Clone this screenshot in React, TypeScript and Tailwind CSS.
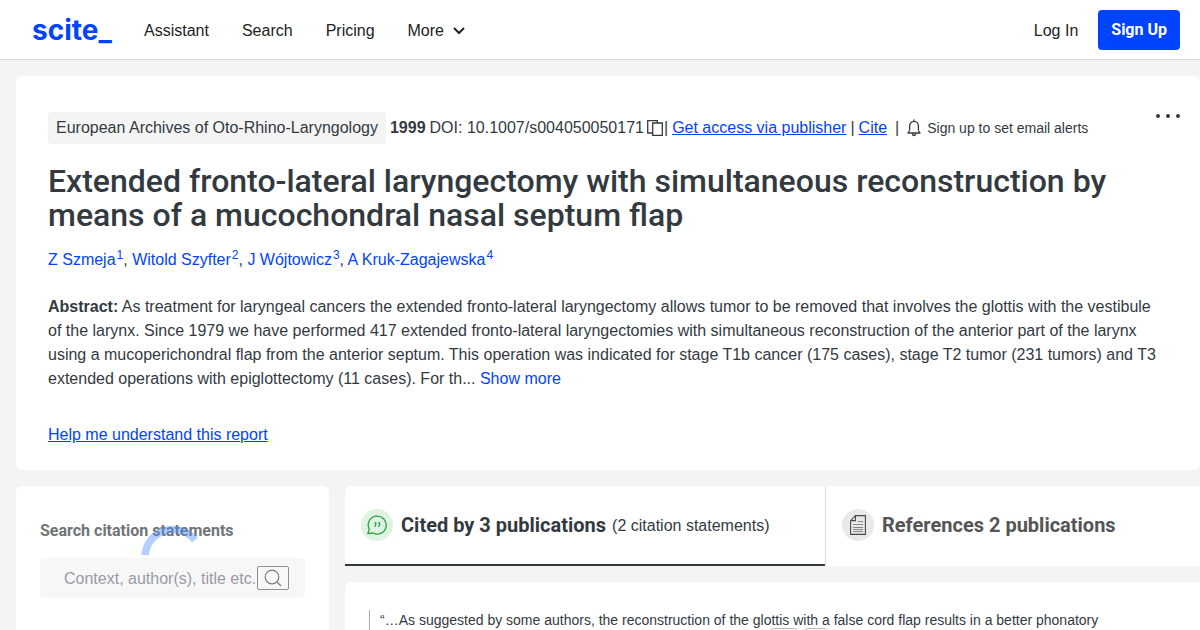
import { useState } from "react";

const authors = ["Z Szmeja", "Witold Szyfter", "J Wójtowicz", "A Kruk-Zagajewska"];

const navLinks = ["Assistant", "Search", "Pricing"];

function CopyIcon() {
  return (
    <svg width="18" height="18" viewBox="0 0 18 18" fill="none" stroke="currentColor" strokeWidth="1.3">
      <path d="M6 14H1.7V1.7h9.6V4" />
      <path d="M6.7 4h9.6v12.3H6.7z" />
    </svg>
  );
}

function BellIcon() {
  return (
    <svg width="14" height="18" viewBox="0 0 14 18" fill="none" stroke="currentColor" strokeWidth="1.3">
      <path d="M7 .5v1.7M.6 14h12.8M2.6 11.5V7.2C2.6 4.5 4.4 2.4 7 2.4s4.4 2.1 4.4 4.8v4.3" />
      <path d="M2.6 11.5L1.2 14M11.4 11.5l1.4 2.5M5.4 14.2c.1 1.7.8 2.3 1.6 2.3s1.5-.6 1.6-2.3" />
    </svg>
  );
}

function QuoteBubbleIcon() {
  return (
    <svg width="20" height="20" viewBox="0 0 20 20" fill="none" stroke="#2f9e44" strokeWidth="1.3">
      <path d="M.8 18.6l1.5-4.3A9 9 0 1 1 6 18z" strokeLinejoin="round" />
      <path d="M7.4 7.8h1.4v1.5c0 1.3-.5 2-1.3 2.5M11.2 7.8h1.4v1.5c0 1.3-.5 2-1.3 2.5" />
    </svg>
  );
}

function DocumentIcon() {
  return (
    <svg width="18" height="20" viewBox="0 0 18 20" fill="none" stroke="#4a4a4a" strokeWidth="1.1">
      <path d="M6.5.6h9.9v18.8H1.6V5.6zM6.5.6v5H1.6" />
      <path d="M9 6.5h5M4 9.5h10M4 12.5h10M4 14.5h10M4 16.5h10" strokeWidth="1" stroke="#888" />
    </svg>
  );
}

function Spinner() {
  return (
    <svg className="absolute left-[124px] top-[38px]" width="62" height="34" viewBox="0 0 62 34" fill="none">
      <path d="M5.1 31A28 28 0 0 1 55 16.1" stroke="#4d8dff" strokeOpacity=".42" strokeWidth="7.5" />
    </svg>
  );
}

export default function App() {
  const [query, setQuery] = useState("");

  return (
    <div className="flex h-screen flex-col overflow-hidden bg-[#f4f4f4] font-['Liberation_Sans',Arial,sans-serif] text-base text-[#333a3f]">
      <header className="flex h-[60px] shrink-0 items-center border-b border-[#d6d6d6] bg-white pl-8 pr-5 text-[#222]">
        <a href="#" className="w-20 font-['Inter',sans-serif] text-[28px] font-bold leading-8 text-[#0044ff]">
          scite_
        </a>
        <nav className="ml-8 flex items-center gap-[33px] pt-0.5">
          {navLinks.map((label) => (
            <a key={label} href="#">{label}</a>
          ))}
          <button type="button" className="flex items-center gap-2">
            More
            <svg width="14" height="8" viewBox="0 0 14 8" fill="none" stroke="currentColor" strokeWidth="2">
              <path d="M2 1l5 5 5-5" />
            </svg>
          </button>
        </nav>
        <a href="#" className="ml-auto pt-0.5">Log In</a>
        <a href="#" className="ml-5 rounded bg-[#0044ff] px-[13px] py-2 font-['Roboto',sans-serif] font-bold text-white">Sign Up</a>
      </header>

      <main className="flex flex-1 flex-col gap-4 pl-4 pt-4">
        <section className="relative rounded-md bg-white px-8 pb-[23px] pt-9">
          <button type="button" aria-label="More options" className="absolute right-5 top-9 flex gap-1.5 py-0.5">
            <span className="size-1 rounded-full bg-[#333a3f]" />
            <span className="size-1 rounded-full bg-[#333a3f]" />
            <span className="size-1 rounded-full bg-[#333a3f]" />
          </button>

          <div className="flex items-center whitespace-nowrap">
            <span className="rounded bg-[#f4f4f4] px-2 py-1">European Archives of Oto-Rhino-Laryngology</span>
            <b className="ml-1">1999</b>
            <span className="ml-1">DOI: 10.1007/s004050050171</span>
            <button type="button" aria-label="Copy DOI" className="ml-0.5"><CopyIcon /></button>
            <span>|</span>
            <a href="#" className="ml-1 text-[#0044ff] underline">Get access via publisher</a>
            <span className="mx-1">|</span>
            <a href="#" className="text-[#0044ff] underline">Cite</a>
            <span className="mx-2">|</span>
            <button type="button" className="flex items-center gap-1.5 text-sm">
              <BellIcon />
              Sign up to set email alerts
            </button>
          </div>

          <h1 className="mt-5 font-['Roboto',sans-serif] text-[32px] font-medium leading-[34px]">
            Extended fronto-lateral laryngectomy with simultaneous reconstruction by means of a mucochondral nasal septum flap
          </h1>

          <p className="mt-4 leading-6">
            {authors.map((name, i) => (
              <span key={name}>
                {i > 0 && ", "}
                <a href="#" className="text-[#0044ff]">
                  {name}
                  <sup className="ml-px text-xs">{i + 1}</sup>
                </a>
              </span>
            ))}
          </p>

          <p className="mt-[23px] leading-6">
            <b>Abstract:</b> As treatment for laryngeal cancers the extended fronto-lateral laryngectomy allows tumor to be removed that involves the glottis with the vestibule
            of the larynx. Since 1979 we have performed 417 extended fronto-lateral laryngectomies with simultaneous reconstruction of the anterior part of the larynx
            using a mucoperichondral flap from the anterior septum. This operation was indicated for stage T1b cancer (175 cases), stage T2 tumor (231 tumors) and T3
            extended operations with epiglottectomy (11 cases). For th...{" "}
            <button type="button" className="text-[#0044ff]">Show more</button>
          </p>

          <a href="#" className="mt-8 inline-block text-[#0044ff] underline">Help me understand this report</a>
        </section>

        <div className="flex flex-1 gap-4">
          <aside className="relative w-[313px] shrink-0 rounded-t-md bg-white px-6 pt-8">
            <label htmlFor="statement-search" className="block pt-px font-['Roboto',sans-serif] font-bold leading-6 text-[#6f7577]">
              Search citation statements
            </label>
            <div className="mt-[15px] flex h-10 items-center rounded bg-[#f7f7f7] pl-6 pr-4">
              <input
                id="statement-search"
                value={query}
                onChange={(e) => setQuery(e.target.value)}
                placeholder="Context, author(s), title etc."
                className="w-full min-w-0 bg-transparent pt-0.5 outline-none placeholder:text-[#9a9ba6]"
              />
              <button type="button" aria-label="Search" className="flex h-6 w-8 shrink-0 items-center justify-center rounded-xs border border-[#8f8f8f] text-[#7c7c7c]">
                <svg width="18" height="18" viewBox="0 0 18 18" fill="none" stroke="currentColor" strokeWidth="1.2">
                  <circle cx="8" cy="8" r="6.8" />
                  <path d="M13 13l4 4" />
                </svg>
              </button>
            </div>
            <Spinner />
          </aside>

          <div className="flex min-w-0 flex-1 flex-col gap-4">
            <div className="flex h-20 shrink-0 rounded-tl-md bg-white">
              <button type="button" className="flex w-[480px] items-center rounded-tl-md border-b-2 border-[#333a3f] px-4">
                <span className="flex size-8 items-center justify-center rounded-full bg-[#def4e0]"><QuoteBubbleIcon /></span>
                <span className="ml-2 font-['Roboto',sans-serif] text-xl font-bold">Cited by 3 publications</span>
                <span className="ml-1.5 pt-0.5">(2 citation statements)</span>
              </button>
              <button type="button" className="flex flex-1 items-center gap-2 border-b-2 border-l border-b-white border-l-[#dedede] px-4 font-['Roboto',sans-serif] text-xl font-bold text-[#555]">
                <span className="flex size-8 items-center justify-center rounded-full bg-[#e9e9e9]"><DocumentIcon /></span>
                References 2 publications
              </button>
            </div>

            <article className="flex-1 rounded-tl-md bg-white px-6 pt-7">
              <blockquote className="border-l border-[#aaa] pl-2.5 pt-0.5 text-sm leading-4">
                “…As suggested by some authors, the reconstruction of the glottis with a false cord flap results in a better phonatory
                {/* citation badges inside the quote */}
                <span className="flex gap-1.5 pl-[390px]">
                  <span className="h-5 w-7 rounded-sm border border-[#bbb]" />
                  <span className="h-5 w-6 rounded-sm border border-[#bbb]" />
                </span>
              </blockquote>
            </article>
          </div>
        </div>
      </main>
    </div>
  );
}
